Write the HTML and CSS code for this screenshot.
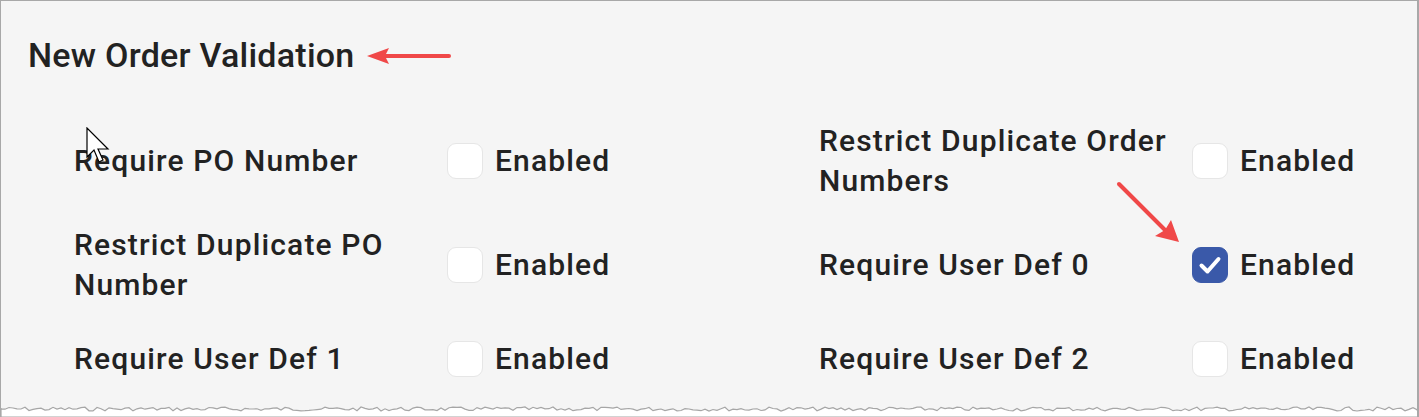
FILE: index.html
```html
<!DOCTYPE html>
<html>
<head>
<meta charset="utf-8">
<link rel="stylesheet" href="styles.css">
</head>
<body>
<div class="frame">
  <div class="title-row">
    <h2 class="title">New Order Validation</h2>
    <svg class="arrow-left" width="90" height="20" viewBox="0 0 90 20">
      <line x1="82" y1="10" x2="14" y2="10" stroke="#f04848" stroke-width="4" stroke-linecap="round"/>
      <polygon points="0,10 22,2 18,10 22,18" fill="#f04848"/>
    </svg>
  </div>
  <div class="grid">
    <div class="item">
      <div class="label">Require PO Number</div>
      <span class="box"></span>
      <span class="enabled">Enabled</span>
    </div>
    <div class="item">
      <div class="label">Restrict Duplicate Order Numbers</div>
      <span class="box"></span>
      <span class="enabled">Enabled</span>
    </div>
    <div class="item">
      <div class="label">Restrict Duplicate PO Number</div>
      <span class="box"></span>
      <span class="enabled">Enabled</span>
    </div>
    <div class="item">
      <div class="label">Require User Def 0</div>
      <span class="box checked">
        <svg width="36" height="36" viewBox="0 0 36 36"><polyline points="9.5,18.5 15.5,24.5 26.5,12" fill="none" stroke="#fff" stroke-width="4" stroke-linecap="round" stroke-linejoin="round"/></svg>
      </span>
      <span class="enabled">Enabled</span>
      <svg class="arrow-diag" width="80" height="80" viewBox="0 0 80 80">
        <line x1="4" y1="4" x2="52" y2="52" stroke="#f04848" stroke-width="4" stroke-linecap="round"/>
        <polygon points="64,62 40,56 50,50 56,40" fill="#f04848"/>
      </svg>
    </div>
    <div class="item">
      <div class="label">Require User Def 1</div>
      <span class="box"></span>
      <span class="enabled">Enabled</span>
    </div>
    <div class="item">
      <div class="label">Require User Def 2</div>
      <span class="box"></span>
      <span class="enabled">Enabled</span>
    </div>
  </div>
  <svg class="cursor" width="26" height="40" viewBox="0 0 26 40">
    <path d="M1,1 L1,30 L8,23 L13,35 L17,33 L12,22 L22,22 Z" fill="#fff" stroke="#000" stroke-width="1.2" stroke-linejoin="miter"/>
  </svg>
  <svg class="torn" width="1419" height="14" viewBox="0 0 1419 14" preserveAspectRatio="none">
    <path id="tear" fill="#ffffff" stroke="#a6a6a6" stroke-width="1.2" d=""/>
  </svg>
</div>
<script src="script.js"></script>
</body>
</html>
```

FILE: script.js
```js
(function(){
  var p = document.getElementById('tear');
  var d = 'M0,5';
  var seed = 7;
  function rnd(){ seed = (seed * 9301 + 49297) % 233280; return seed / 233280; }
  for (var x = 0; x <= 1419; x += 4) {
    var y = 4 + rnd() * 4;
    d += ' L' + x + ',' + y.toFixed(1);
  }
  d += ' L1419,14 L0,14 Z';
  p.setAttribute('d', d);
})();
```

FILE: styles.css
```css
html, body {
  margin: 0;
  padding: 0;
  background: #ffffff;
}
body {
  font-family: Roboto, "Liberation Sans", Arial, sans-serif;
  color: #222222;
}
.frame {
  position: relative;
  width: 1419px;
  height: 417px;
  box-sizing: border-box;
  background: #f5f5f5;
  border-top: 1px solid #a8a8a8;
  border-left: 1px solid #a8a8a8;
  border-right: 2px solid #a8a8a8;
  overflow: hidden;
  padding: 32px 0 0 27px;
}
.title-row {
  display: flex;
  align-items: center;
  gap: 12px;
  height: 44px;
}
.title {
  margin: 0;
  font-size: 34px;
  font-weight: 500;
  line-height: 44px;
  letter-spacing: 0.25px;
}
.arrow-left {
  margin-top: 2px;
}
.grid {
  display: grid;
  grid-template-columns: 745px 560px;
  row-gap: 24px;
  margin-top: 44px;
  padding-left: 46px;
}
.item {
  position: relative;
  display: flex;
  align-items: center;
  min-height: 60px;
}
.label {
  width: 373px;
  font-size: 30px;
  line-height: 40px;
  font-weight: 500;
  letter-spacing: 1.15px;
  padding-right: 12px;
  box-sizing: border-box;
}
.box {
  width: 36px;
  height: 36px;
  box-sizing: border-box;
  border: 1.5px solid #e6e6e6;
  border-radius: 9px;
  background: #ffffff;
  margin-right: 12px;
  flex: none;
}
.box.checked {
  background: #3a59a9;
  border-color: #3a59a9;
  position: relative;
}
.box.checked svg {
  position: absolute;
  left: -1.5px;
  top: -1.5px;
}
.enabled {
  font-size: 30px;
  line-height: 40px;
  font-weight: 500;
  letter-spacing: 1.15px;
}
.arrow-diag {
  position: absolute;
  left: 296px;
  top: -45px;
}
.cursor {
  position: absolute;
  left: 85px;
  top: 126px;
}
.torn {
  position: absolute;
  left: 0;
  bottom: 0;
}
```
